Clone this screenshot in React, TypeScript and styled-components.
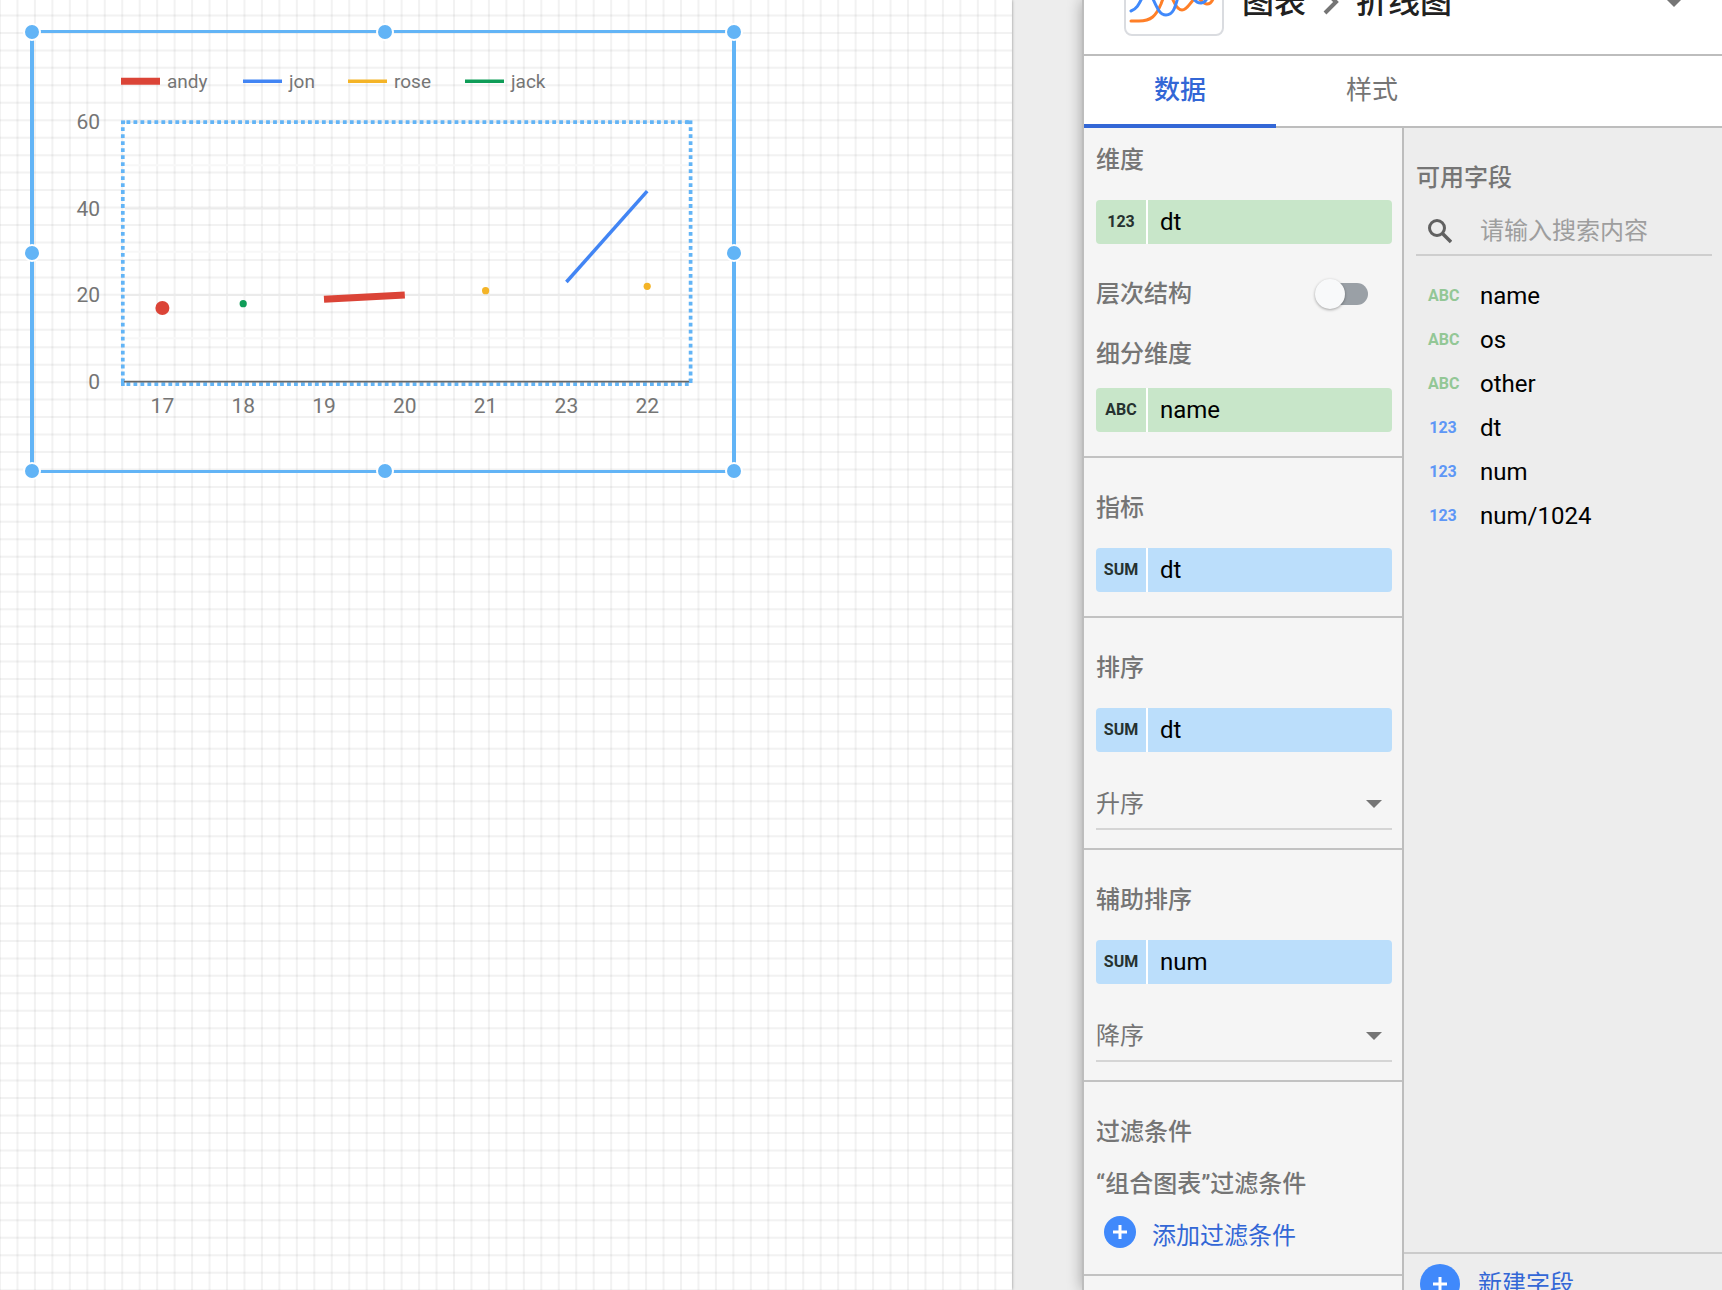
import React, { useState } from "react";
import styled, { createGlobalStyle } from "styled-components";

const FONT = 'Roboto, "Noto Sans CJK SC", sans-serif';

const GlobalStyle = createGlobalStyle`
  *, *::before, *::after { box-sizing: border-box; }
  body { margin: 0; font-family: ${FONT}; background: #ededed; }
  button, input, select { font: inherit; color: inherit; }
  button { border: 0; padding: 0; background: none; text-align: left; cursor: pointer; }
  h2, ul { margin: 0; padding: 0; }
`;

/* ---------- shell ---------- */

const Shell = styled.div`
  display: flex;
  height: 100vh;
  overflow: hidden;
`;

const Workspace = styled.main`
  flex: 1;
  min-width: 0;
  display: flex;
  padding-right: 70px;
  background: #ededed;
`;

const Paper = styled.section`
  position: relative;
  flex: 1;
  background: #fff;
  box-shadow: 0 0 3px rgba(0, 0, 0, 0.4);
`;

const GridLayer = styled.svg`
  display: block;
  width: 100%;
  height: 100%;
`;

const Panel = styled.aside`
  position: relative;
  flex: 0 0 640px;
  display: flex;
  flex-direction: column;
  border-left: 2px solid #bdbdbd;
  background: #fff;
  box-shadow: 0 0 14px rgba(0, 0, 0, 0.32);
`;

/* ---------- chart on the canvas ---------- */

const Selection = styled.div`
  position: absolute;
  left: 30px;
  top: 30px;
  width: 706px;
  height: 443px;
  border: solid #62b4f6;
  border-width: 3px 4px;
`;

const Handle = styled.span<{ $x: string; $y: string }>`
  position: absolute;
  left: ${(p) => p.$x};
  top: ${(p) => p.$y};
  width: 18px;
  height: 18px;
  margin: -9px;
  border: 2px solid #fff;
  border-radius: 50%;
  background: #62b4f6;
`;

const ChartSvg = styled.svg`
  display: block;
  font-family: ${FONT};
  fill: #757575;
`;

const TILE = 227;
const CELLS = 13;

function PaperGrid() {
  const steps = Array.from({ length: CELLS }, (_, i) => (i * TILE) / CELLS + 1);
  return (
    <GridLayer aria-hidden="true">
      <defs>
        <pattern id="cells" x="-1" y="-3" width={TILE} height={TILE} patternUnits="userSpaceOnUse">
          {steps.map((s) => (
            <g key={s} stroke="#000" strokeOpacity="0.05" strokeWidth="2">
              <line x1={s} x2={s} y1="0" y2={TILE} />
              <line y1={s} y2={s} x1="0" x2={TILE} />
            </g>
          ))}
        </pattern>
      </defs>
      <rect width="100%" height="100%" fill="url(#cells)" />
    </GridLayer>
  );
}

const RED = "#db4437";
const BLUE = "#4285f4";
const YELLOW = "#f4b427";
const GREEN = "#0f9d58";

const legend = [
  { name: "andy", color: RED, x: 121, w: 7 },
  { name: "jon", color: BLUE, x: 243, w: 3.5 },
  { name: "rose", color: YELLOW, x: 348, w: 3.5 },
  { name: "jack", color: GREEN, x: 465, w: 3.5 },
];
const days = ["17", "18", "19", "20", "21", "23", "22"];
const dayX = (i: number) => 162.4 + i * 80.8;
const valueY = (v: number) => 381.5 - v * 4.325;

function LineChart() {
  return (
    <ChartSvg width="698" height="437" viewBox="34 33 698 437" role="img" aria-label="折线图">
      {legend.map((l) => (
        <g key={l.name}>
          <line x1={l.x} x2={l.x + 39} y1="81.2" y2="81.2" stroke={l.color} strokeWidth={l.w} />
          <text x={l.x + 46} y="88" fontSize="19">{l.name}</text>
        </g>
      ))}
      {[10, 30, 50].map((v) => (
        <line key={v} x1="125" x2="689" y1={valueY(v)} y2={valueY(v)} stroke="#f7f7f7" strokeWidth="2" />
      ))}
      {[20, 40, 60].map((v) => (
        <line key={v} x1="125" x2="689" y1={valueY(v)} y2={valueY(v)} stroke="#ebebeb" strokeWidth="2" />
      ))}
      {[0, 20, 40, 60].map((v) => (
        <text key={v} x="100" y={valueY(v) + 7} fontSize="21" textAnchor="end">{v}</text>
      ))}
      {days.map((d, i) => (
        <text key={d} x={dayX(i)} y="413" fontSize="21" textAnchor="middle">{d}</text>
      ))}
      <g stroke="#62b4f6" strokeWidth="3.7" strokeDasharray="3.8 3.18">
        <line x1="126.5" x2="690" y1="122.2" y2="122.2" />
        <line x1="126.5" x2="690" y1="384.2" y2="384.2" />
        <line x1="122.8" x2="122.8" y1="127.3" y2="380" />
        <line x1="690.6" x2="690.6" y1="127.3" y2="380" />
      </g>
      <g fill="#62b4f6">
        <rect x="121" y="120.4" width="4" height="3.7" />
        <rect x="686" y="120.4" width="6.4" height="3.7" />
        <rect x="121" y="379" width="3.7" height="7" />
        <rect x="688.8" y="379" width="3.7" height="4" />
      </g>
      <line x1="124" x2="689" y1="381.6" y2="381.6" stroke="#666" strokeWidth="1.8" />
      <circle cx={dayX(0)} cy={valueY(17)} r="7" fill={RED} />
      <circle cx={dayX(1)} cy={valueY(18)} r="3.6" fill={GREEN} />
      <line x1={dayX(2)} y1={valueY(19)} x2={dayX(3)} y2={valueY(20)} stroke={RED} strokeWidth="7" />
      <circle cx={dayX(4)} cy={valueY(21)} r="3.6" fill={YELLOW} />
      <line x1={dayX(5)} y1={valueY(23)} x2={dayX(6)} y2={valueY(44)} stroke={BLUE} strokeWidth="3.5" />
      <circle cx={dayX(6)} cy={valueY(22)} r="3.6" fill={YELLOW} />
    </ChartSvg>
  );
}

const START_X = "-2px";
const MID_X = "calc(50% + 2px)";
const END_X = "calc(100% + 2px)";
const START_Y = "-1px";
const MID_Y = "calc(50% + 1px)";
const END_Y = "calc(100% + 1px)";

const handles: [string, string][] = [
  [START_X, START_Y], [MID_X, START_Y], [END_X, START_Y],
  [START_X, MID_Y], [END_X, MID_Y],
  [START_X, END_Y], [MID_X, END_Y], [END_X, END_Y],
];

/* ---------- panel header and tabs ---------- */

const Header = styled.header`
  flex: 0 0 56px;
  display: flex;
  flex-direction: column;
  justify-content: flex-end;
  padding: 0 38px 18px 40px;
  border-bottom: 2px solid #bdbdbd;
  overflow: hidden;
`;

const TypePicker = styled.button`
  flex: none;
  display: flex;
  align-items: center;
  height: 68px;
  color: #212121;
  font-size: 32px;
  line-height: 48px;
  font-weight: 500;
`;

const Thumb = styled.span`
  width: 100px;
  height: 68px;
  margin-right: 18px;
  border: 2px solid #dadce0;
  border-radius: 8px;
`;

const Crumb = styled.svg`
  margin: 0 16px;
`;

const HeaderCaret = styled.svg`
  margin-left: auto;
`;

const Tabs = styled.div`
  flex: 0 0 72px;
  display: flex;
  box-shadow: inset 0 -2px #bdbdbd;
`;

const Tab = styled.button<{ $active: boolean }>`
  width: 192px;
  padding-bottom: 6px;
  border-bottom: 4px solid ${(p) => (p.$active ? "#3367d6" : "transparent")};
  color: ${(p) => (p.$active ? "#3367d6" : "#757575")};
  font-size: 26px;
  font-weight: ${(p) => (p.$active ? 500 : 400)};
  text-align: center;
`;

const Columns = styled.div`
  flex: 1;
  min-height: 0;
  display: grid;
  grid-template-columns: minmax(0, 1fr) 318px;
`;

const Config = styled.div`
  border-right: 2px solid #bdbdbd;
  background: #f5f5f5;
  overflow: hidden;
`;

const Section = styled.section<{ $first?: boolean; $tight?: boolean }>`
  padding: ${(p) => (p.$first ? 14 : 32)}px 10px ${(p) => (p.$tight ? 18 : 24)}px 12px;
  border-bottom: 2px solid #c2c2c2;
`;

const Title = styled.h2`
  color: #757575;
  font-size: 24px;
  line-height: 36px;
  font-weight: 500;
`;

const SubTitle = styled(Title)`
  margin-top: 16px;
`;

const GroupTitle = styled(Title)`
  margin: 24px 0 -6px;
`;

const Chip = styled.button<{ $tone: string }>`
  display: grid;
  grid-template-columns: 50px 1fr;
  gap: 2px;
  width: 100%;
  height: 44px;
  margin-top: 22px;
  border-radius: 4px;
  background: linear-gradient(to right, ${(p) => p.$tone} 50px, #fff 50px, #fff 52px, ${(p) => p.$tone} 52px);
  color: #000;
  font-size: 24px;
  line-height: 44px;
`;

const Badge = styled.span<{ $color?: string }>`
  color: ${(p) => p.$color || "#263230"};
  font-size: 16px;
  font-weight: 700;
  text-align: center;
`;

const ChipName = styled.span`
  padding-left: 12px;
`;

const SwitchRow = styled.label`
  display: flex;
  align-items: center;
  justify-content: space-between;
  margin-top: 32px;
  padding-right: 24px;
  color: #757575;
  font-size: 24px;
  line-height: 36px;
  font-weight: 500;
`;

const Switch = styled.input`
  appearance: none;
  display: flex;
  align-items: center;
  width: 48px;
  height: 22px;
  margin: 0;
  border-radius: 11px;
  background: #9aa0a6;

  &::before {
    content: "";
    width: 30px;
    height: 30px;
    margin-left: -5px;
    border-radius: 50%;
    background: #f8f9fa;
    box-shadow: 0 1px 3px rgba(0, 0, 0, 0.35);
  }
  &:checked::before { margin-left: 23px; }
`;

const SelectBox = styled.div`
  display: flex;
  align-items: center;
  height: 50px;
  margin-top: 28px;
  padding-right: 10px;
  border-bottom: 2px solid #d5d5d5;
`;

const Select = styled.select`
  appearance: none;
  flex: 1;
  height: 48px;
  padding: 0;
  border: 0;
  outline: 0;
  background: none;
  color: #757575;
  font-size: 24px;
`;

const AddFilter = styled.button`
  display: flex;
  align-items: flex-start;
  gap: 16px;
  margin-top: 14px;
  padding-left: 8px;
  color: #3367d6;
  font-size: 24px;
  line-height: 40px;
`;

/* ---------- available fields ---------- */

const Fields = styled.div`
  display: flex;
  flex-direction: column;
  min-height: 0;
  background: #ededed;
`;

const FieldsHead = styled.div`
  padding: 32px 10px 18px 12px;
`;

const Search = styled.label`
  display: flex;
  align-items: center;
  gap: 28px;
  height: 48px;
  margin-top: 12px;
  padding-left: 12px;
  border-bottom: 2px solid #cecece;
`;

const SearchInput = styled.input`
  flex: 1;
  min-width: 0;
  height: 46px;
  padding: 0;
  border: 0;
  outline: 0;
  background: none;
  color: #000;
  font-size: 24px;

  &::placeholder { color: #9e9e9e; opacity: 1; }
`;

const FieldList = styled.ul`
  flex: 1;
  min-height: 0;
  overflow: hidden;
  list-style: none;
`;

const Field = styled.button`
  display: grid;
  grid-template-columns: 30px 1fr;
  gap: 22px;
  width: 100%;
  padding-left: 24px;
  color: #000;
  font-size: 24px;
  line-height: 44px;
`;

const Footer = styled.div`
  flex: 0 0 38px;
  padding: 10px 16px;
  border-top: 2px solid #cbcbcb;
  overflow: hidden;
`;

const NewField = styled.button`
  display: flex;
  align-items: center;
  gap: 18px;
  color: #3367d6;
  font-size: 24px;
  line-height: 40px;
`;

function PlusIcon({ size }: { size: number }) {
  const c = size / 2;
  return (
    <svg width={size} height={size} aria-hidden="true">
      <circle cx={c} cy={c} r={c} fill="#4089fb" />
      <path d={`M${c} ${c - 7}v14M${c - 7} ${c}h14`} stroke="#fff" strokeWidth="3" />
    </svg>
  );
}

function Caret() {
  return (
    <svg width="16" height="8" aria-hidden="true">
      <path d="M0 0h16L8 8z" fill="#757575" />
    </svg>
  );
}

const GREEN_CHIP = "#c8e6c9";
const BLUE_CHIP = "#bbdefb";

function FieldChip({ badge, name, tone }: { badge: string; name: string; tone: string }) {
  return (
    <Chip type="button" $tone={tone}>
      <Badge>{badge}</Badge>
      <ChipName>{name}</ChipName>
    </Chip>
  );
}

function SortSelect({ label, initial }: { label: string; initial: string }) {
  return (
    <SelectBox>
      <Select aria-label={label} defaultValue={initial}>
        <option>升序</option>
        <option>降序</option>
      </Select>
      <Caret />
    </SelectBox>
  );
}

const fields = [
  { type: "ABC", name: "name" },
  { type: "ABC", name: "os" },
  { type: "ABC", name: "other" },
  { type: "123", name: "dt" },
  { type: "123", name: "num" },
  { type: "123", name: "num/1024" },
];

export default function App() {
  const [tab, setTab] = useState("数据");
  return (
    <Shell>
      <GlobalStyle />
      <Workspace>
        <Paper>
          <PaperGrid />
          <Selection>
            <LineChart />
            {handles.map(([x, y]) => (
              <Handle key={x + y} $x={x} $y={y} />
            ))}
          </Selection>
        </Paper>
      </Workspace>
      <Panel>
        <Header>
          <TypePicker type="button">
            <Thumb>
              <svg width="96" height="64" viewBox="0 0 96 64" fill="none" strokeWidth="3" strokeLinecap="round" aria-hidden="true">
                <path d="M5 51H13C25 51 30 46 35 34C39 22 43 20 47 30C50 37 53 40 56 40C62 40 65 30 70 28C74 27 76 34 81 34C85 34 87 30 88 26" stroke="#ff7f27" />
                <path d="M5 41C11 39 13 34 17 26C20 19 23 19 27 29C31 38 34 45 40 45C47 45 49 38 52 27C56 17 61 20 67 28C72 35 79 35 82 26" stroke="#4089fb" />
              </svg>
            </Thumb>
            图表
            <Crumb width="18" height="28" viewBox="0 0 18 28" aria-hidden="true">
              <path d="M3 3L14 14L3 25" fill="none" stroke="#757575" strokeWidth="4" />
            </Crumb>
            折线图
            <HeaderCaret width="20" height="10" aria-hidden="true">
              <path d="M0 0h20L10 10z" fill="#757575" />
            </HeaderCaret>
          </TypePicker>
        </Header>
        <Tabs role="tablist">
          {["数据", "样式"].map((t) => (
            <Tab key={t} type="button" role="tab" aria-selected={tab === t} $active={tab === t} onClick={() => setTab(t)}>
              {t}
            </Tab>
          ))}
        </Tabs>
        <Columns>
          <Config>
            <Section $first>
              <Title>维度</Title>
              <FieldChip badge="123" name="dt" tone={GREEN_CHIP} />
              <SwitchRow>
                层次结构
                <Switch type="checkbox" role="switch" />
              </SwitchRow>
              <GroupTitle>细分维度</GroupTitle>
              <FieldChip badge="ABC" name="name" tone={GREEN_CHIP} />
            </Section>
            <Section>
              <Title>指标</Title>
              <FieldChip badge="SUM" name="dt" tone={BLUE_CHIP} />
            </Section>
            <Section $tight>
              <Title>排序</Title>
              <FieldChip badge="SUM" name="dt" tone={BLUE_CHIP} />
              <SortSelect label="排序" initial="升序" />
            </Section>
            <Section $tight>
              <Title>辅助排序</Title>
              <FieldChip badge="SUM" name="num" tone={BLUE_CHIP} />
              <SortSelect label="辅助排序" initial="降序" />
            </Section>
            <Section $tight>
              <Title>过滤条件</Title>
              <SubTitle>“组合图表”过滤条件</SubTitle>
              <AddFilter type="button">
                <PlusIcon size={32} />
                添加过滤条件
              </AddFilter>
            </Section>
          </Config>
          <Fields>
            <FieldsHead>
              <Title>可用字段</Title>
              <Search>
                <svg width="24" height="26" viewBox="0 0 24 26" fill="none" stroke="#616161" strokeWidth="3" aria-hidden="true">
                  <circle cx="9" cy="10" r="7.5" />
                  <path d="M14.5 15.5L23 24" strokeWidth="3.6" />
                </svg>
                <SearchInput aria-label="搜索字段" placeholder="请输入搜索内容" />
              </Search>
            </FieldsHead>
            <FieldList>
              {fields.map((f) => (
                <li key={f.name}>
                  <Field type="button">
                    <Badge $color={f.type === "ABC" ? "#93c796" : "#5e97f6"}>{f.type}</Badge>
                    {f.name}
                  </Field>
                </li>
              ))}
            </FieldList>
            <Footer>
              <NewField type="button">
                <PlusIcon size={40} />
                新建字段
              </NewField>
            </Footer>
          </Fields>
        </Columns>
      </Panel>
    </Shell>
  );
}
